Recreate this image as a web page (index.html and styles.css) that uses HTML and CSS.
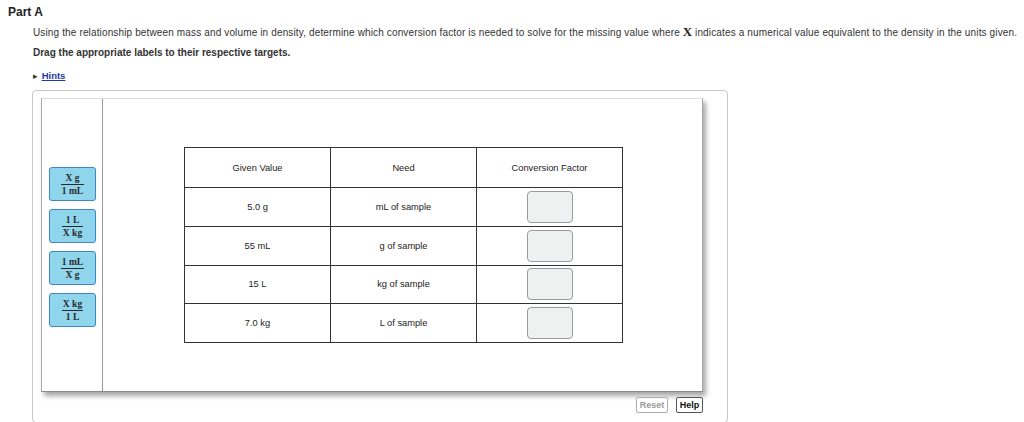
FILE: index.html
```html
<!DOCTYPE html>
<html>
<head>
<meta charset="utf-8">
<link rel="stylesheet" href="styles.css">
</head>
<body>
<h2 class="part">Part A</h2>
<div class="content">
  <p class="prompt">Using the relationship between mass and volume in density, determine which conversion factor is needed to solve for the missing value where <span class="bigx">X</span> indicates a numerical value equivalent to the density in the units given.</p>
  <p class="instr">Drag the appropriate labels to their respective targets.</p>
  <div class="hints"><span class="tri">&#9656;</span> <a class="hints-link" href="#">Hints</a></div>
</div>
<div class="outer">
  <div class="board">
    <div class="palette">
      <div class="label"><span class="frac"><span class="num">X g</span><span class="den">1 mL</span></span></div>
      <div class="label"><span class="frac"><span class="num">1 L</span><span class="den">X kg</span></span></div>
      <div class="label"><span class="frac"><span class="num">1 mL</span><span class="den">X g</span></span></div>
      <div class="label"><span class="frac"><span class="num">X kg</span><span class="den">1 L</span></span></div>
    </div>
    <div class="main">
      <table class="grid">
        <tr class="head"><td>Given Value</td><td>Need</td><td>Conversion Factor</td></tr>
        <tr><td>5.0 g</td><td>mL of sample</td><td><div class="target"></div></td></tr>
        <tr><td>55 mL</td><td>g of sample</td><td><div class="target"></div></td></tr>
        <tr><td>15 L</td><td>kg of sample</td><td><div class="target"></div></td></tr>
        <tr><td>7.0 kg</td><td>L of sample</td><td><div class="target"></div></td></tr>
      </table>
    </div>
  </div>
  <div class="buttons">
    <button class="btn reset">Reset</button>
    <button class="btn help">Help</button>
  </div>
</div>
</body>
</html>
```

FILE: styles.css
```css
html, body {
  margin: 0;
  padding: 0;
  background: #fff;
}
body {
  font-family: "Liberation Sans", Arial, sans-serif;
  color: #222;
}
.part {
  margin: 0;
  padding: 6px 8px 0;
  font-size: 12px;
  line-height: 12px;
  font-weight: bold;
  color: #222;
}
.content {
  padding-left: 33px;
}
.prompt {
  margin: 7px 0 0;
  font-size: 10px;
  line-height: 14px;
  letter-spacing: 0.14px;
  white-space: nowrap;
  color: #333;
}
.bigx {
  font-family: "Liberation Serif", "Times New Roman", serif;
  font-weight: bold;
  font-size: 13px;
  letter-spacing: 0;
  color: #222;
}
.instr {
  margin: 6px 0 0;
  font-size: 10px;
  line-height: 14px;
  font-weight: bold;
  color: #333;
}
.hints {
  margin-top: 9px;
  font-size: 9.5px;
  line-height: 14px;
}
.tri {
  font-size: 9px;
  color: #333;
}
.hints-link {
  color: #1a3aa8;
  font-weight: bold;
  text-decoration: underline;
  margin-left: 1px;
}
.outer {
  box-sizing: border-box;
  margin: 7px 0 0 32px;
  width: 696px;
  height: 333px;
  border: 1px solid #c8c8c8;
  border-radius: 4px;
  padding: 7px 24px 0 8px;
}
.board {
  box-sizing: border-box;
  height: 294px;
  display: flex;
  border: 1px solid #a8a8a8;
  border-top-color: #dcdcdc;
  border-bottom-color: #8a8a8a;
  box-shadow: 3px 4px 5px rgba(0, 0, 0, 0.35);
  background: #fff;
}
.palette {
  width: 61px;
  border-right: 1px solid #999;
  display: flex;
  flex-direction: column;
  justify-content: center;
  gap: 8px;
  padding: 4px 0 0 7px;
  box-sizing: border-box;
  flex: none;
}
.label {
  box-sizing: border-box;
  width: 47px;
  height: 34px;
  background: #8fd5ec;
  border: 1px solid #3f86c6;
  border-radius: 3px;
  display: flex;
  align-items: center;
  justify-content: center;
}
.frac {
  display: inline-flex;
  flex-direction: column;
  align-items: stretch;
  font-family: "Liberation Serif", "Times New Roman", serif;
  font-weight: bold;
  font-size: 9.5px;
  line-height: 10px;
  color: #2a2a2a;
  text-align: center;
}
.num {
  border-bottom: 1px solid #2a2a2a;
  padding: 0 1px 1px;
}
.den {
  padding: 1px 1px 0;
}
.main {
  flex: 1;
  display: flex;
  align-items: center;
  justify-content: center;
  padding-left: 2px;
}
.grid {
  border-collapse: collapse;
  font-size: 9.3px;
  color: #222;
}
.grid td {
  border: 1px solid #333;
  text-align: center;
  vertical-align: middle;
  width: 145px;
  height: 37.6px;
  padding: 0;
}
.grid .head td {
  height: 39px;
}
.target {
  box-sizing: border-box;
  width: 46px;
  height: 32px;
  margin: 0 auto;
  background: #eff0f0;
  border: 1.5px solid #9a9aa2;
  border-radius: 4px;
}
.buttons {
  display: flex;
  justify-content: flex-end;
  gap: 8px;
  margin-top: 5px;
}
.btn {
  box-sizing: border-box;
  height: 16px;
  padding: 0 2px;
  font-family: "Liberation Sans", Arial, sans-serif;
  font-size: 9px;
  font-weight: bold;
  line-height: 14px;
  background: #fff;
  border: 1px solid #888;
  border-radius: 2px;
}
.reset {
  width: 32px;
  color: #9a9a9a;
  border-color: #aaa;
}
.help {
  width: 27px;
  color: #111;
  border-color: #555;
}
```
